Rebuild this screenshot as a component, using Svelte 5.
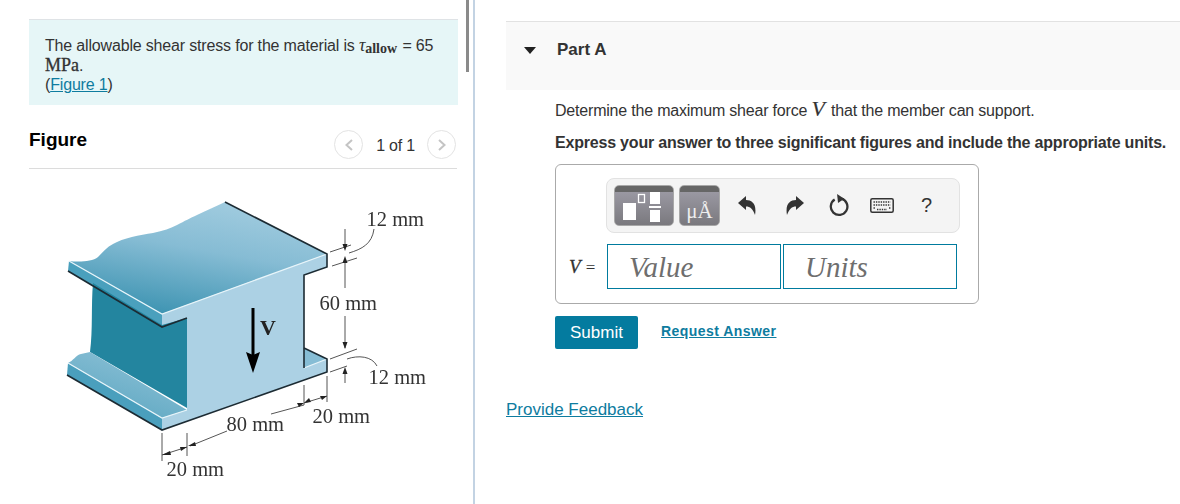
<script>
  const figureLabels = [
    { x: 366.5, y: 226, t: '12 mm' },
    { x: 319.5, y: 310, t: '60 mm' },
    { x: 368.5, y: 384, t: '12 mm' },
    { x: 312.5, y: 423, t: '20 mm' },
    { x: 226.5, y: 431, t: '80 mm' },
    { x: 166.5, y: 476, t: '20 mm' }
  ];
  const dims = [
    'M330 252 L351 245', 'M332 266 L357 258', 'M330 359 L357 349', 'M330 372 L347 366',
    'M345 229 L345 245', 'M345 262 L345 288', 'M345 316 L345 348', 'M345 374 L345 383',
    'M304 385 L304 405', 'M327 376 L327 402', 'M304 403 L327 396', 'M162 433 L162 461',
    'M187 433 L187 456', 'M162 455 L187 447', 'M190 446 L227 431', 'M271 414 L304 405'
  ];
  const curves = ['M349 253 C362 249 372 244 374 229', 'M347 359 C358 355 372 356 377 366'];
  const ticks = [
    '345,251 342.5,244 347.5,244', '345,256 342.5,263 347.5,263', '345,349 342.5,342 347.5,342',
    '345,367 342.5,374 347.5,374', '304,403 297,403 299,407', '304,403 311,402 309,398',
    '327,396 320,396 322,400', '162,455 170,451 171,455', '187,447 180,447 181,451', '188,446 195,442 196,446'
  ];
</script>

<div class="page">
  <section class="left">
    <div class="thumb"></div>
    <div class="prompt">
      <p>The allowable shear stress for the material is <span class="tau">τ<b>allow</b></span> = 65<br /><span class="mpa">MPa</span>.</p>
      <p class="figlink">(<a href="#fig">Figure 1</a>)</p>
    </div>
    <div class="fig-head">
      <h2>Figure</h2>
      <div class="pager">
        <span class="round"><svg viewBox="0 0 8 12" width="8" height="12"><path d="M7 1 L1.5 6 L7 11" /></svg></span>
        <span class="count">1 of 1</span>
        <span class="round"><svg viewBox="0 0 8 12" width="8" height="12"><path d="M1 1 L6.5 6 L1 11" /></svg></span>
      </div>
    </div>
    <svg class="beam" viewBox="29 169 429 335" width="429" height="335" role="img" aria-label="I-beam cross-section with dimensions">
      <defs>
        <linearGradient id="top" x1="0.75" y1="0" x2="0.35" y2="1">
          <stop offset="0" stop-color="#a3cde0" />
          <stop offset="0.45" stop-color="#86bcd4" />
          <stop offset="1" stop-color="#3e94b2" />
        </linearGradient>
        <linearGradient id="low" x1="0.8" y1="0" x2="0.2" y2="1">
          <stop offset="0" stop-color="#8fc2d8" />
          <stop offset="1" stop-color="#5ba6c0" />
        </linearGradient>
      </defs>
      <path fill="#acd1e4" d="M162 314 L327 254 L327 267 L304 275 L304 348 L327 359 L327 372 L162 430 L162 418 L187 410 L187 318 L162 327 Z" />
      <path fill="url(#top)" d="M69 261 C78 262 92 262 98 257 C103 252 107 247 113 244 C123 238 140 235 153 233 C163 231 171 228 177 225 C185 221 190 218 197 215 C206 211 216 206 225 202 L327 254 L162 314 Z" />
      <path fill="#4aa0bd" d="M69 261 L162 314 L162 327 L68 271 Z" />
      <path fill="#23859f" d="M93 283 L162 325 L187 318 L187 408 L90 352 C93 330 91 305 93 283 Z" />
      <path fill="url(#low)" d="M90 352 L187 410 L162 418 L68 363 C73 361 76 355 81 354 C84 353 87 353 90 352 Z" />
      <path fill="#4a9fbd" d="M68 363 L162 418 L162 430 L67 375 Z" />
      <path fill="#86bdd5" d="M304 348 L327 359 L304 368 Z" />
      <path class="hi" d="M69 261 L162 314 L327 254" />
      <path class="hi" d="M68 363 L162 418 L187 410" />
      <path class="hi" d="M304 368 L327 359" />
      <path class="edge" d="M225 202 L327 254 L327 267 L304 275 L304 368" />
      <path class="edge" d="M304 348 L327 359 L327 372 L162 430 L67 375" />
      <path class="edge" d="M68 271 L162 327 L187 318" />
      <path class="shaft" d="M253 308 L253 356" />
      <polygon fill="#000" points="253,373 246,352 253,355 260,352" />
      <text class="vb" x="260" y="335">V</text>
      {#each dims as d}<path class="dim" d={d} />{/each}
      {#each curves as d}<path class="dim" d={d} />{/each}
      {#each ticks as p}<polygon points={p} fill="#222" />{/each}
      {#each figureLabels as l}<text class="lbl" x={l.x} y={l.y}>{l.t}</text>{/each}
    </svg>
  </section>

  <main class="right">
    <header class="part">
      <span class="caret"></span>
      <h3>Part A</h3>
    </header>
    <div class="body">
      <p class="q">Determine the maximum shear force <i class="v">V</i> that the member can support.</p>
      <p class="ex">Express your answer to three significant figures and include the appropriate units.</p>
      <div class="answer">
        <div class="toolbar">
          <button class="tool wide" aria-label="Templates">
            <svg viewBox="0 0 59 41" width="59" height="41">
              <rect x="9" y="18" width="13" height="17" fill="#fff" />
              <rect x="24.5" y="9.5" width="6" height="8" fill="none" stroke="#fff" stroke-width="1.3" />
              <rect x="36" y="7" width="10" height="12" fill="#fff" />
              <rect x="35" y="21" width="12" height="2" fill="#fff" />
              <rect x="36" y="25" width="10" height="12" fill="#fff" />
            </svg>
          </button>
          <button class="tool unit">μÅ</button>
          <span class="ico i1"><svg viewBox="0 0 18 20" width="18" height="20"><path d="M0 7 L8 0 V4 C14 4 19 8 17 19 C15 13 12 10.5 8 10.5 V14 Z" /></svg></span>
          <span class="ico i2"><svg viewBox="0 0 18 20" width="18" height="20"><path d="M18 7 L10 0 V4 C4 4 -1 8 1 19 C3 13 6 10.5 10 10.5 V14 Z" /></svg></span>
          <span class="ico i3"><svg viewBox="0 0 22 24" width="21" height="23"><path class="ring" d="M7 5.8 A8.7 8.7 0 1 0 14 4.8" /><path d="M9.5 0 L17 5 L10.5 9.5 Z" /></svg></span>
          <span class="ico i4"><svg viewBox="0 0 24 15" width="24" height="15"><rect x="0.8" y="0.8" width="22.4" height="13.4" rx="1.5" class="kb" /><path class="keys" d="M3.5 4 H20.5 M3.5 7 H20.5 M3.5 10 H5 M7 11.5 H17 M19 10 H20.5" /></svg></span>
          <span class="help">?</span>
        </div>
        <div class="inputs">
          <label for="val"><i>V</i> =</label>
          <div class="field" id="val">Value</div>
          <div class="field">Units</div>
        </div>
      </div>
      <div class="actions">
        <button class="submit">Submit</button>
        <a href="#req" class="req">Request Answer</a>
      </div>
    </div>
    <a class="feedback" href="#fb">Provide Feedback</a>
  </main>
</div>

<style>
  :global(body) { margin: 0; background: #fff; }
  .page {
    display: flex; width: 1180px; height: 504px; overflow: hidden;
    font-family: "Liberation Sans", Arial, sans-serif; color: #333; font-size: 16px;
  }
  .left {
    position: relative; box-sizing: border-box; width: 475px; flex: none;
    padding: 19px 16px 0 29px; border-right: 2px solid #c3d3e3;
  }
  .thumb { position: absolute; right: 4px; top: 0; width: 3px; height: 72px; background: #8a8a8a; }
  .prompt {
    box-sizing: border-box; width: 429px; height: 86px; padding: 16px 16px 0;
    background: #e6f6f7; border-top: 1px solid #dfe3e6; line-height: 19px; letter-spacing: -0.17px;
  }
  .prompt p { margin: 0; }
  .prompt a, .feedback { color: #0e7c9f; text-decoration: underline; }
  .tau { font-family: "Liberation Serif", serif; font-style: italic; font-size: 18px; }
  .tau b { font-style: normal; font-size: 14px; position: relative; top: 2px; letter-spacing: 0; margin-right: 1px; }
  .mpa { font-family: "Liberation Serif", serif; font-size: 18px; letter-spacing: 0; -webkit-text-stroke: 0.3px #333; }
  .fig-head {
    display: flex; justify-content: space-between; box-sizing: border-box; width: 428px; height: 64px;
    border-bottom: 1px solid #dcdcdc; padding: 24px 1px 0 0;
  }
  h2 { margin: 0; font-size: 19px; line-height: 22px; color: #000; font-weight: 700; }
  .pager { display: flex; align-items: flex-start; gap: 12px; padding-top: 1px; }
  .round {
    display: flex; align-items: center; justify-content: center; box-sizing: border-box;
    width: 29px; height: 29px; border: 1px solid #e3e3e3; border-radius: 50%;
  }
  .round path { fill: none; stroke: #c4c4c4; stroke-width: 2; }
  .count { line-height: 20px; margin: 6px 0 0 1px; letter-spacing: -0.2px; }
  .beam { display: block; filter: blur(0.35px); }
  .edge { fill: none; stroke: #1c2b33; stroke-width: 1.6; }
  .hi { fill: none; stroke: #e8f5fa; stroke-width: 1.3; }
  .shaft { stroke: #000; stroke-width: 3; }
  .vb { font: 700 22px "Liberation Serif", serif; fill: #222; }
  .dim { fill: none; stroke: #555; stroke-width: 1; }
  .lbl { font: 20.5px "Liberation Serif", serif; fill: #333; }

  .right { flex: 1; padding: 21px 0 0 31px; min-width: 0; }
  .part {
    display: flex; align-items: flex-start; height: 68px; background: #f9f9f9; border-top: 1px solid #e2e2e2;
  }
  .caret {
    width: 0; height: 0; margin: 25px 0 0 18px;
    border-left: 6.5px solid transparent; border-right: 6.5px solid transparent; border-top: 7px solid #222;
  }
  h3 { margin: 18px 0 0 21px; font-size: 17px; line-height: 20px; font-weight: 700; color: #333; }
  .body { padding-left: 49px; }
  .q { margin: 0; padding-top: 9px; height: 34px; line-height: 20px; letter-spacing: -0.2px; }
  .v { font: italic 22px/20px "Liberation Serif", serif; letter-spacing: 0; margin-right: 2px; -webkit-text-stroke: 0.2px #333; }
  .ex { margin: 0; font-weight: 700; line-height: 20px; letter-spacing: -0.2px; white-space: nowrap; }
  .answer {
    box-sizing: border-box; width: 424px; height: 140px; margin-top: 11px; padding: 13px 0 0 50px;
    border: 1px solid #aaa; border-radius: 6px;
  }
  .toolbar {
    position: relative; display: flex; align-items: center; box-sizing: border-box; width: 354px; height: 55px;
    padding-left: 7px; gap: 5px; background: #f4f4f4; border: 1px solid #e2e2e2; border-radius: 8px;
  }
  .tool {
    display: block; padding: 0; height: 41px; border: 1px solid #a8a8a8; border-radius: 5px; color: #fff;
    background: linear-gradient(#666 0 6px, #9a98a2 6px, #7a797e 100%); overflow: hidden;
  }
  .wide { width: 60px; }
  .wide svg { display: block; margin: -1px; }
  .unit { width: 41px; font: 21px/1 "Liberation Serif", serif; padding-top: 12px; color: #eee; }
  .ico { display: flex; }
  .ico path { fill: #333; }
  .i1 { margin-left: 13px; }
  .i2 { margin-left: 25px; }
  .i3 { margin-left: 19px; }
  .i4 { margin-left: 16px; }
  .ico .ring { fill: none; stroke: #333; stroke-width: 2.4; }
  .ico .kb { fill: #f4f4f4; stroke: #333; stroke-width: 1.5; }
  .ico .keys { fill: none; stroke: #333; stroke-width: 1.4; stroke-dasharray: 1.4 1; }
  .help { margin-left: 22px; font-size: 20px; color: #333; }
  .inputs { display: flex; align-items: center; margin-top: 11px; gap: 2px; margin-left: -37px; }
  label { width: 34px; margin-right: 2px; font: 17px "Liberation Serif", serif; color: #333; white-space: nowrap; word-spacing: 1px; }
  label i { font-size: 19px; -webkit-text-stroke: 0.3px #333; }
  .field {
    box-sizing: border-box; width: 174px; height: 45px; padding: 0 0 0 21px;
    border: 1px solid #007b9e; font: italic 29px/45px "Liberation Serif", serif; color: #6e6e6e;
  }
  .actions { display: flex; align-items: flex-start; margin-top: 12px; gap: 23px; }
  .submit {
    width: 83px; height: 33px; padding: 0; border: 0; border-radius: 2px; background: #047b9f; color: #fff;
    font: 17px "Liberation Sans", sans-serif;
  }
  .req { font-size: 14px; font-weight: 700; line-height: 18px; margin-top: 6px; color: #0e7c9f; letter-spacing: 0.45px; }
  .feedback { display: inline-block; margin-top: 51px; line-height: 20px; font-size: 17px; }
</style>
